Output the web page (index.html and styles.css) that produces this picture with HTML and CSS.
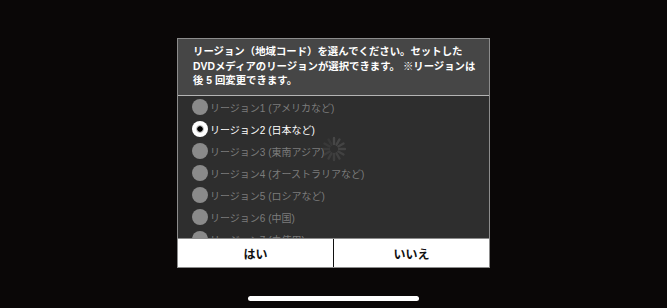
FILE: index.html
```html
<!DOCTYPE html>
<html lang="ja">
<head>
<meta charset="utf-8">
<link rel="stylesheet" href="styles.css">
</head>
<body>
<div class="screen">
  <div class="dialog">
    <div class="header">リージョン（地域コード）を選んでください。セットしたDVDメディアのリージョンが選択できます。 ※リージョンは後 5 回変更できます。</div>
    <div class="list">
      <div class="row disabled"><span class="radio"></span><span class="label">リージョン1 (アメリカなど)</span></div>
      <div class="row selected"><span class="radio"></span><span class="label">リージョン2 (日本など)</span></div>
      <div class="row disabled"><span class="radio"></span><span class="label">リージョン3 (東南アジア)</span></div>
      <div class="row disabled"><span class="radio"></span><span class="label">リージョン4 (オーストラリアなど)</span></div>
      <div class="row disabled"><span class="radio"></span><span class="label">リージョン5 (ロシアなど)</span></div>
      <div class="row disabled"><span class="radio"></span><span class="label">リージョン6 (中国)</span></div>
      <div class="row disabled"><span class="radio"></span><span class="label">リージョン7 (未使用)</span></div>
      <svg class="spinner" width="26" height="26" viewBox="-13 -13 26 26">
        <g stroke="#4a4a4a" stroke-width="2.4" stroke-linecap="round">
          <line x1="0" y1="-5" x2="0" y2="-11" transform="rotate(0)" opacity="0.9"/>
          <line x1="0" y1="-5" x2="0" y2="-11" transform="rotate(30)" opacity="0.85"/>
          <line x1="0" y1="-5" x2="0" y2="-11" transform="rotate(60)" opacity="0.8"/>
          <line x1="0" y1="-5" x2="0" y2="-11" transform="rotate(90)" opacity="0.75"/>
          <line x1="0" y1="-5" x2="0" y2="-11" transform="rotate(120)" opacity="0.7"/>
          <line x1="0" y1="-5" x2="0" y2="-11" transform="rotate(150)" opacity="0.65"/>
          <line x1="0" y1="-5" x2="0" y2="-11" transform="rotate(180)" opacity="0.6"/>
          <line x1="0" y1="-5" x2="0" y2="-11" transform="rotate(210)" opacity="0.55"/>
          <line x1="0" y1="-5" x2="0" y2="-11" transform="rotate(240)" opacity="0.5"/>
          <line x1="0" y1="-5" x2="0" y2="-11" transform="rotate(270)" opacity="0.45"/>
          <line x1="0" y1="-5" x2="0" y2="-11" transform="rotate(300)" opacity="0.4"/>
          <line x1="0" y1="-5" x2="0" y2="-11" transform="rotate(330)" opacity="0.35"/>
        </g>
      </svg>
    </div>
    <div class="buttons">
      <div class="btn">はい</div>
      <div class="btn">いいえ</div>
    </div>
  </div>
  <div class="home-indicator"></div>
</div>
</body>
</html>
```
FILE: styles.css
```css
html, body {
  margin: 0;
  padding: 0;
  background: #0a0707;
}
body {
  width: 667px;
  height: 308px;
  overflow: hidden;
  font-family: "Liberation Sans", "Noto Sans CJK JP", sans-serif;
}
.screen {
  display: flex;
  flex-direction: column;
  align-items: center;
  padding-top: 38px;
}
.dialog {
  width: 311px;
  border: 1px solid #8c8c8c;
  display: flex;
  flex-direction: column;
}
.header {
  background: #464646;
  color: #ffffff;
  font-weight: bold;
  font-size: 10.4px;
  line-height: 14.5px;
  padding: 6px 12px 6px 15px;
  height: 44px;
  border-bottom: 1px solid #b4b4b4;
}
.list {
  position: relative;
  background: #2e2e2e;
  height: 142px;
  overflow: hidden;
}
.row {
  height: 22px;
  display: flex;
  align-items: center;
  padding-left: 14px;
  gap: 2px;
  font-size: 10px;
}
.radio {
  width: 16px;
  height: 16px;
  border-radius: 50%;
  box-sizing: border-box;
  flex: none;
}
.disabled .radio {
  background: #8a8a8a;
}
.disabled .label {
  color: #7c7c7c;
}
.selected .radio {
  background: #ffffff;
  position: relative;
}
.selected .radio::after {
  content: "";
  position: absolute;
  left: 4px;
  top: 4px;
  width: 8px;
  height: 8px;
  box-sizing: border-box;
  border-radius: 50%;
  background: #000;
  border: 1.5px solid #bdbdbd;
  background-clip: padding-box;
}
.selected .label {
  color: #ffffff;
}
.spinner {
  position: absolute;
  left: 143px;
  top: 40px;
}
.buttons {
  display: flex;
  border-top: 1px solid #8c8c8c;
  background: #ffffff;
}
.btn {
  flex: 1;
  height: 28px;
  display: flex;
  align-items: center;
  justify-content: center;
  font-weight: bold;
  font-size: 12px;
  color: #111;
}
.btn + .btn {
  border-left: 1px solid #111;
}
.home-indicator {
  margin-top: 28px;
  width: 171px;
  height: 5px;
  border-radius: 3px;
  background: #ffffff;
}
```
